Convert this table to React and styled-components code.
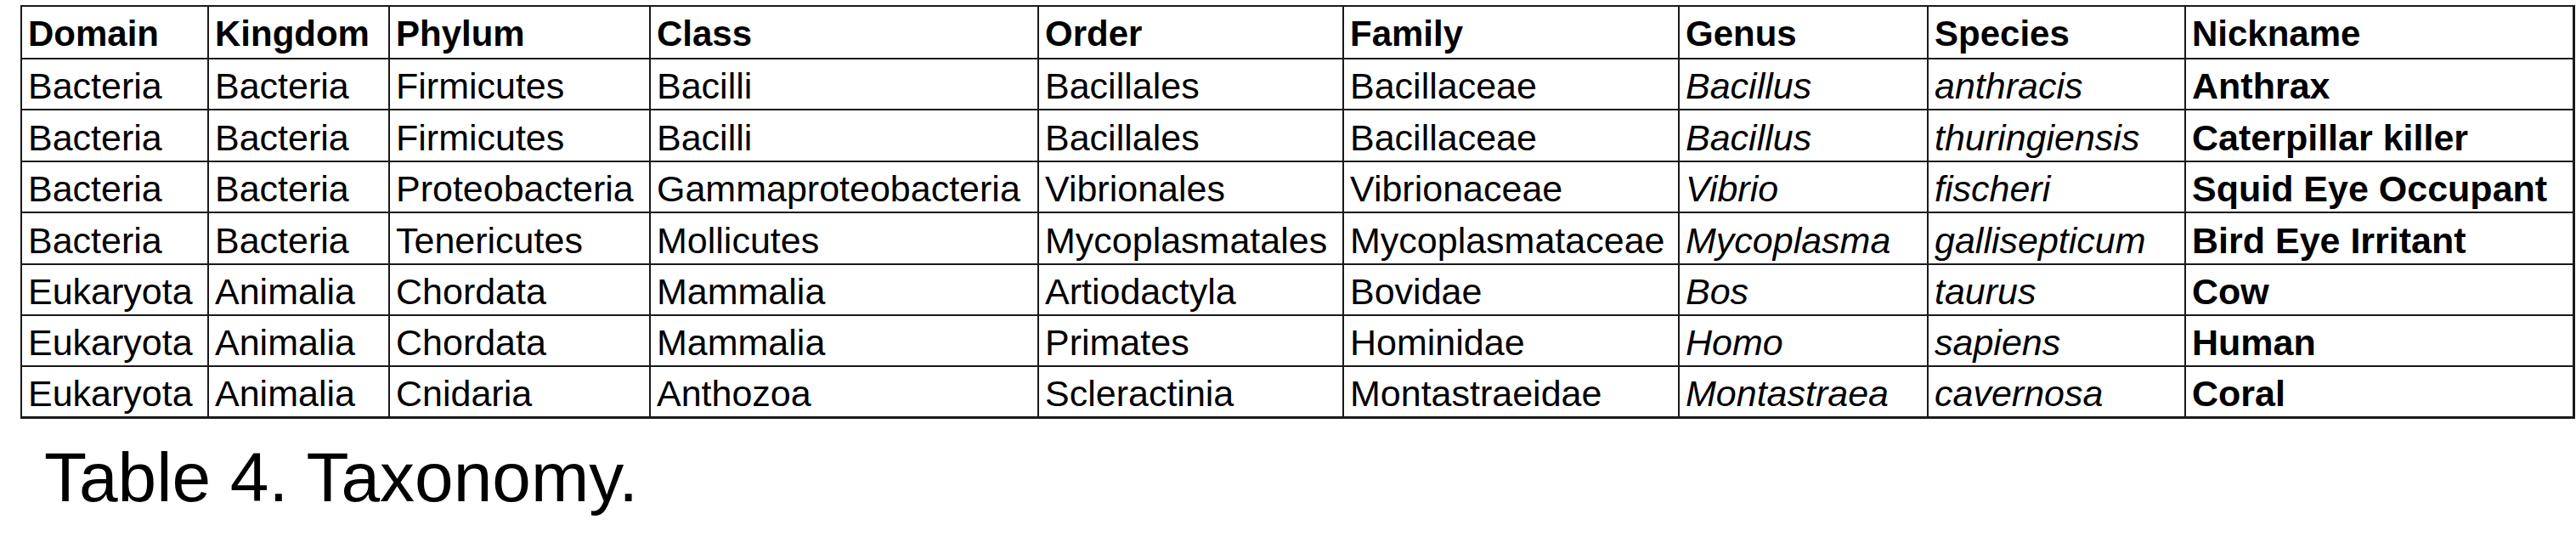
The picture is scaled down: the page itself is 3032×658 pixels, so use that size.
import React from "react";
import styled, { createGlobalStyle } from "styled-components";

const GlobalStyle = createGlobalStyle`
  html, body {
    margin: 0;
    padding: 0;
    background: #ffffff;
  }
  body {
    font-family: "Liberation Sans", Arial, sans-serif;
    color: #000;
  }
`;

const Page = styled.div`
  padding: 6px 0 0 24px;
  width: 3032px;
  height: 658px;
  box-sizing: border-box;
  background: #fff;
`;

const Table = styled.table`
  border-collapse: collapse;
  table-layout: fixed;
  width: 3004px;
  border-top: 2px solid #1a1a1a;
  border-left: 1px solid #555;
  border-right: 3px solid #1a1a1a;
  border-bottom: 3px solid #1a1a1a;
`;

const HeadRow = styled.tr`
  height: 62px;
`;

const BodyRow = styled.tr`
  height: 60.4px;
`;

const HeadCell = styled.th`
  border: 2px solid #1a1a1a;
  padding: 0 7px 4px;
  text-align: left;
  vertical-align: bottom;
  font-size: 42px;
  font-weight: 700;
  white-space: nowrap;
  overflow: hidden;
`;

const Cell = styled.td`
  border: 2px solid #1a1a1a;
  padding: 0 7px 2px;
  text-align: left;
  vertical-align: bottom;
  font-size: 43px;
  font-weight: ${(p) => (p.$bold ? 700 : 400)};
  font-style: ${(p) => (p.$italic ? "italic" : "normal")};
  white-space: nowrap;
  overflow: hidden;
`;

const Caption = styled.div`
  margin: 28px 0 0 28px;
  font-size: 82px;
  line-height: 1;
  font-weight: 400;
`;

const widths = [220, 213, 307, 457, 359, 395, 293, 303, 457];
const headers = [
  "Domain",
  "Kingdom",
  "Phylum",
  "Class",
  "Order",
  "Family",
  "Genus",
  "Species",
  "Nickname",
];

const rows = [
  ["Bacteria", "Bacteria", "Firmicutes", "Bacilli", "Bacillales", "Bacillaceae", "Bacillus", "anthracis", "Anthrax"],
  ["Bacteria", "Bacteria", "Firmicutes", "Bacilli", "Bacillales", "Bacillaceae", "Bacillus", "thuringiensis", "Caterpillar killer"],
  ["Bacteria", "Bacteria", "Proteobacteria", "Gammaproteobacteria", "Vibrionales", "Vibrionaceae", "Vibrio", "fischeri", "Squid Eye Occupant"],
  ["Bacteria", "Bacteria", "Tenericutes", "Mollicutes", "Mycoplasmatales", "Mycoplasmataceae", "Mycoplasma", "gallisepticum", "Bird Eye Irritant"],
  ["Eukaryota", "Animalia", "Chordata", "Mammalia", "Artiodactyla", "Bovidae", "Bos", "taurus", "Cow"],
  ["Eukaryota", "Animalia", "Chordata", "Mammalia", "Primates", "Hominidae", "Homo", "sapiens", "Human"],
  ["Eukaryota", "Animalia", "Cnidaria", "Anthozoa", "Scleractinia", "Montastraeidae", "Montastraea", "cavernosa", "Coral"],
];

export default function App() {
  return (
    <>
      <GlobalStyle />
      <Page>
        <Table>
          <colgroup>
            {widths.map((w, i) => (
              <col key={i} style={{ width: w }} />
            ))}
          </colgroup>
          <thead>
            <HeadRow>
              {headers.map((h) => (
                <HeadCell key={h}>{h}</HeadCell>
              ))}
            </HeadRow>
          </thead>
          <tbody>
            {rows.map((r, ri) => (
              <BodyRow key={ri}>
                {r.map((c, ci) => (
                  <Cell key={ci} $italic={ci === 6 || ci === 7} $bold={ci === 8}>
                    {c}
                  </Cell>
                ))}
              </BodyRow>
            ))}
          </tbody>
        </Table>
        <Caption>Table 4. Taxonomy.</Caption>
      </Page>
    </>
  );
}
